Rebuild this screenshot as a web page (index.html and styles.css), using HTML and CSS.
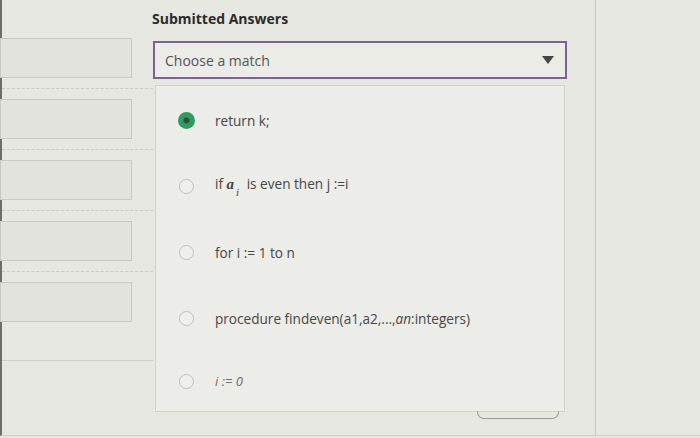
FILE: index.html
```html
<!DOCTYPE html>
<html lang="en">

<head>
    <meta charset="UTF-8">
    <meta name="viewport" content="width=device-width, initial-scale=1.0">
    <title>Submitted Answers</title>
    <link rel="stylesheet" href="styles.css">
</head>

<body>

    <div class="screen">
        <div class="match_column">
            <div class="match_box"></div>
            <div class="match_divider"></div>
            <div class="match_box"></div>
            <div class="match_divider"></div>
            <div class="match_box"></div>
            <div class="match_divider"></div>
            <div class="match_box"></div>
            <div class="match_divider"></div>
            <div class="match_box"></div>
            <div class="match_rule"></div>
        </div>

        <div class="answer_column">
            <div class="answer_title">Submitted Answers</div>

            <div class="match_select">
                <span>Choose a match</span>
                <span class="select_arrow"></span>
            </div>

            <div class="option_list">
                <div class="option_row">
                    <span class="radio radio_checked"></span>
                    <span class="option_text">return k;</span>
                </div>
                <div class="option_row">
                    <span class="radio"></span>
                    <span class="option_text">if <i class="math">a<sub>i</sub></i> is even then j :=i</span>
                </div>
                <div class="option_row">
                    <span class="radio"></span>
                    <span class="option_text">for i := 1 to n</span>
                </div>
                <div class="option_row">
                    <span class="radio"></span>
                    <span class="option_text">procedure findeven(a1,a2,...,<i>an</i>:integers)</span>
                </div>
                <div class="option_row option_last">
                    <span class="radio"></span>
                    <span class="option_text option_faint"><i>i</i> := 0</span>
                </div>
                <div class="list_tab"></div>
            </div>
        </div>

        <div class="side_gap"></div>
        <div class="side_panel"></div>
    </div>

</body>

</html>
```

FILE: styles.css
```css
html,
body {
    margin: 0;
    padding: 0;
}

body {
    background: #e7e7e2;
    font-family: "Open Sans", "Liberation Sans", sans-serif;
    color: #444;
    width: 700px;
    height: 438px;
    overflow: hidden;
}

.screen {
    display: flex;
    height: 436px;
    border-left: 2px solid #6d6d6b;
    border-bottom: 1px solid #cfcfca;
    box-sizing: border-box;
}

/* left column with the drop targets */
.match_column {
    width: 151px;
    flex: none;
    padding-top: 38px;
}

.match_box {
    height: 40px;
    width: 132px;
    margin-left: -2px;
    border: 1px solid #c9c9c4;
    background: #e3e3de;
    box-sizing: border-box;
}

.match_divider {
    margin: 10px 0;
    border-top: 1px dashed #cbcbc6;
}

.match_rule {
    margin-top: 38px;
    border-top: 1px solid #cdcdc8;
}

/* middle column */
.answer_column {
    width: 414px;
    flex: none;
}

.answer_title {
    font-size: 14px;
    font-weight: bold;
    color: #2c2c2c;
    line-height: 20px;
    padding-top: 9px;
    margin-left: -1px;
}

.match_select {
    display: flex;
    align-items: center;
    justify-content: space-between;
    height: 38px;
    margin-top: 12px;
    padding: 0 11px 0 10px;
    border: 2px solid #7c6290;
    background: #ebebe7;
    box-sizing: border-box;
    font-size: 14px;
    color: #555;
}

.select_arrow {
    width: 0;
    height: 0;
    border-left: 6px solid transparent;
    border-right: 6px solid transparent;
    border-top: 8px solid #464646;
}

.option_list {
    position: relative;
    margin: 6px 0 0 2px;
    width: 410px;
    height: 327px;
    padding-top: 1px;
    border: 1px solid #d2d2cd;
    background: #ecece8;
    box-sizing: border-box;
}

.option_row {
    display: flex;
    align-items: center;
    height: 66px;
    padding-left: 23px;
}

.option_last {
    height: 60px;
}

.radio {
    width: 15px;
    height: 15px;
    border: 1.5px solid #c0c0bb;
    border-radius: 50%;
    box-sizing: border-box;
    background: #efefeb;
    flex: none;
}

.radio_checked {
    width: 17px;
    height: 17px;
    margin-left: -1px;
    margin-right: -1px;
    border: none;
    background: radial-gradient(circle, #2f4f3c 0 2.5px, #2e9b62 3.5px);
}

.option_text {
    margin-left: 21px;
    font-size: 13.6px;
    color: #474747;
}

.option_text .math {
    font-family: "Liberation Serif", "DejaVu Serif", serif;
    font-weight: bold;
    font-size: 15px;
    color: #444;
    margin-right: 4px;
}

.option_text sub {
    font-weight: normal;
    font-size: 11px;
    vertical-align: -7px;
    margin-left: 2px;
}

.option_faint {
    color: #6f6f6f;
    font-style: italic;
    font-size: 13px;
}

.list_tab {
    position: absolute;
    left: 321px;
    bottom: -8px;
    width: 82px;
    height: 8px;
    border: 1.5px solid #9a9a96;
    border-top: none;
    border-radius: 0 0 7px 7px;
    box-sizing: border-box;
}

/* right side */
.side_gap {
    width: 28px;
    flex: none;
    border-right: 1px solid #c9c9c4;
}

.side_panel {
    flex: 1;
    background: #e8e8e3;
}
```
